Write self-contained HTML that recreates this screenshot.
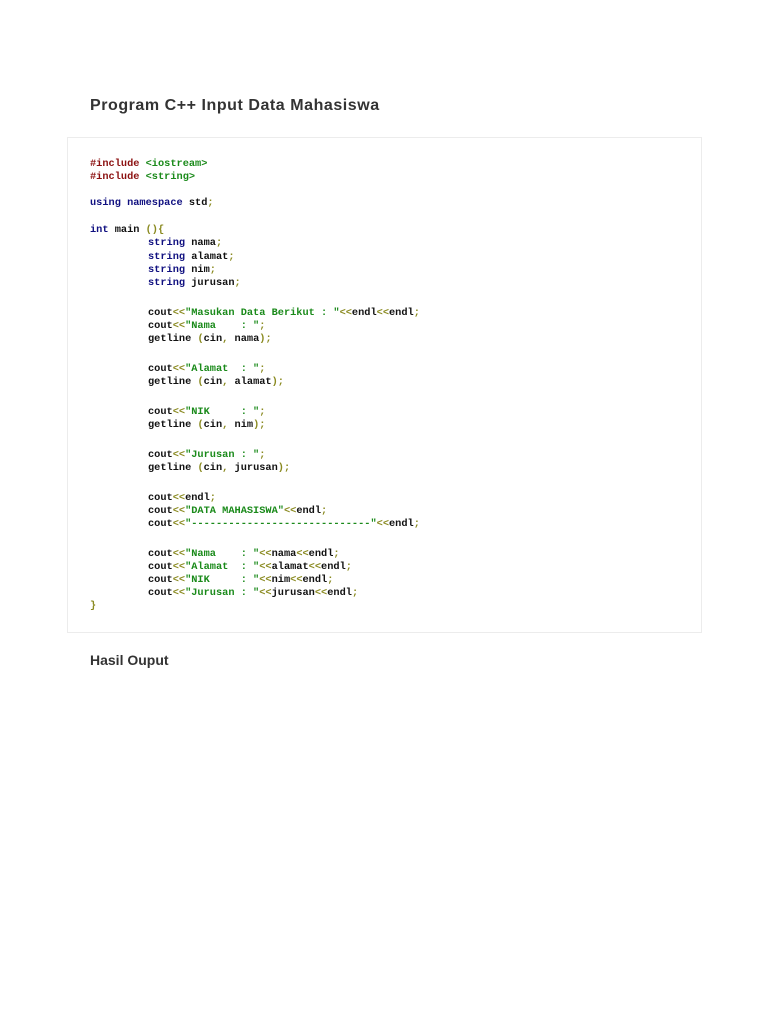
<!DOCTYPE html>
<html><head><style>
body{margin:0;width:768px;height:1024px;background:#fff;position:relative;font-family:"Liberation Sans",sans-serif;}
h1{position:absolute;left:90px;top:97px;margin:0;font-size:16px;font-weight:bold;color:#333;letter-spacing:0.55px;}
h2{position:absolute;left:90px;top:652px;margin:0;font-size:14px;font-weight:bold;color:#333;}
.box{position:absolute;left:67px;top:137px;width:633px;height:494px;border:1px solid #ececec;}
.c{position:absolute;left:0;top:1px;}
.l{position:absolute;font-family:"Liberation Mono",monospace;font-size:10.3px;font-weight:bold;color:#111;white-space:pre;line-height:12px;}
.r{color:#8b1010}.g{color:#1a8a1a}.b{color:#101080}.o{color:#8a8a20}
</style></head><body>
<h1>Program C++ Input Data Mahasiswa</h1>
<div class="box"></div>
<div class="c">
<div class="l" style="left:90px;top:157px"><span class="r">#include</span> <span class="g">&lt;iostream&gt;</span></div>
<div class="l" style="left:90px;top:170px"><span class="r">#include</span> <span class="g">&lt;string&gt;</span></div>
<div class="l" style="left:90px;top:196px"><span class="b">using namespace</span> std<span class="o">;</span></div>
<div class="l" style="left:90px;top:223px"><span class="b">int</span> main <span class="o">(){</span></div>
<div class="l" style="left:148px;top:236px"><span class="b">string</span> nama<span class="o">;</span></div>
<div class="l" style="left:148px;top:250px"><span class="b">string</span> alamat<span class="o">;</span></div>
<div class="l" style="left:148px;top:263px"><span class="b">string</span> nim<span class="o">;</span></div>
<div class="l" style="left:148px;top:276px"><span class="b">string</span> jurusan<span class="o">;</span></div>
<div class="l" style="left:148px;top:306px">cout<span class="o">&lt;&lt;</span><span class="g">"Masukan Data Berikut : "</span><span class="o">&lt;&lt;</span>endl<span class="o">&lt;&lt;</span>endl<span class="o">;</span></div>
<div class="l" style="left:148px;top:319px">cout<span class="o">&lt;&lt;</span><span class="g">"Nama    : "</span><span class="o">;</span></div>
<div class="l" style="left:148px;top:332px">getline <span class="o">(</span>cin<span class="o">,</span> nama<span class="o">);</span></div>
<div class="l" style="left:148px;top:362px">cout<span class="o">&lt;&lt;</span><span class="g">"Alamat  : "</span><span class="o">;</span></div>
<div class="l" style="left:148px;top:375px">getline <span class="o">(</span>cin<span class="o">,</span> alamat<span class="o">);</span></div>
<div class="l" style="left:148px;top:405px">cout<span class="o">&lt;&lt;</span><span class="g">"NIK     : "</span><span class="o">;</span></div>
<div class="l" style="left:148px;top:418px">getline <span class="o">(</span>cin<span class="o">,</span> nim<span class="o">);</span></div>
<div class="l" style="left:148px;top:448px">cout<span class="o">&lt;&lt;</span><span class="g">"Jurusan : "</span><span class="o">;</span></div>
<div class="l" style="left:148px;top:461px">getline <span class="o">(</span>cin<span class="o">,</span> jurusan<span class="o">);</span></div>
<div class="l" style="left:148px;top:491px">cout<span class="o">&lt;&lt;</span>endl<span class="o">;</span></div>
<div class="l" style="left:148px;top:504px">cout<span class="o">&lt;&lt;</span><span class="g">"DATA MAHASISWA"</span><span class="o">&lt;&lt;</span>endl<span class="o">;</span></div>
<div class="l" style="left:148px;top:517px">cout<span class="o">&lt;&lt;</span><span class="g">"-----------------------------"</span><span class="o">&lt;&lt;</span>endl<span class="o">;</span></div>
<div class="l" style="left:148px;top:547px">cout<span class="o">&lt;&lt;</span><span class="g">"Nama    : "</span><span class="o">&lt;&lt;</span>nama<span class="o">&lt;&lt;</span>endl<span class="o">;</span></div>
<div class="l" style="left:148px;top:560px">cout<span class="o">&lt;&lt;</span><span class="g">"Alamat  : "</span><span class="o">&lt;&lt;</span>alamat<span class="o">&lt;&lt;</span>endl<span class="o">;</span></div>
<div class="l" style="left:148px;top:573px">cout<span class="o">&lt;&lt;</span><span class="g">"NIK     : "</span><span class="o">&lt;&lt;</span>nim<span class="o">&lt;&lt;</span>endl<span class="o">;</span></div>
<div class="l" style="left:148px;top:586px">cout<span class="o">&lt;&lt;</span><span class="g">"Jurusan : "</span><span class="o">&lt;&lt;</span>jurusan<span class="o">&lt;&lt;</span>endl<span class="o">;</span></div>
<div class="l" style="left:90px;top:599px"><span class="o">}</span></div>
</div>
<h2>Hasil Ouput</h2>
</body></html>
